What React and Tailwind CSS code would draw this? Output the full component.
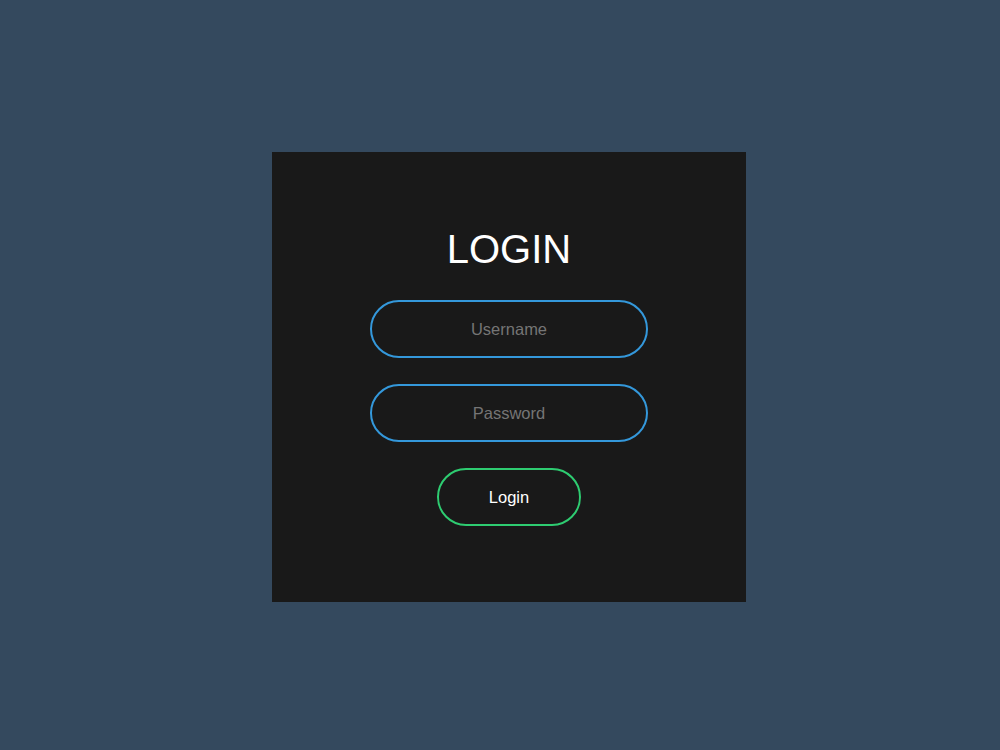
import { useState } from "react";

function LoginBox() {
  const [username, setUsername] = useState("");
  const [password, setPassword] = useState("");

  return (
    <form
      className="flex w-[474px] h-[450px] flex-col items-center bg-[#191919] pt-[77px]"
      onSubmit={(e) => e.preventDefault()}
    >
      <h1 className="text-[40px] leading-none font-normal text-white">LOGIN</h1>
      <input
        type="text"
        value={username}
        onChange={(e) => setUsername(e.target.value)}
        placeholder="Username"
        className="mt-[31px] h-[58px] w-[278px] rounded-full border-2 border-[#3498db] bg-transparent text-center text-[16.5px] text-white outline-none placeholder:text-[#757575]"
      />
      <input
        type="password"
        value={password}
        onChange={(e) => setPassword(e.target.value)}
        placeholder="Password"
        className="mt-[26px] h-[58px] w-[278px] rounded-full border-2 border-[#3498db] bg-transparent text-center text-[16.5px] text-white outline-none placeholder:text-[#757575]"
      />
      <button
        type="submit"
        className="mt-[26px] h-[58px] w-[144px] rounded-full border-2 border-[#2ecc71] bg-transparent text-[16.5px] text-white"
      >
        Login
      </button>
    </form>
  );
}

export default function App() {
  return (
    <div
      className="min-h-screen bg-[#34495e] pt-[152px] pl-[272px]"
      style={{ fontFamily: '"Liberation Sans", Arial, sans-serif' }}
    >
      <LoginBox />
    </div>
  );
}
